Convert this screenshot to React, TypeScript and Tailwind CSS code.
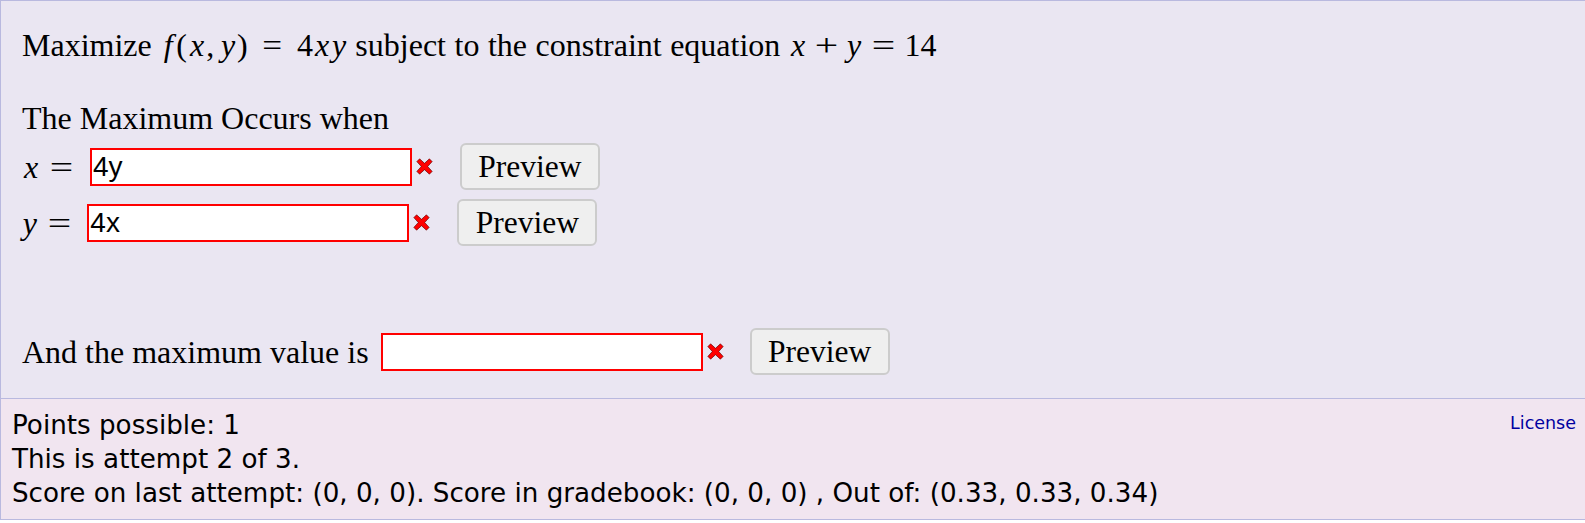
import React from "react";

const XMark = ({ className = "" }: { className?: string }) => (
  <svg className={className} width="17" height="17" viewBox="0 0 16 16">
    <path
      d="M3.4 0.8 L8 5 L12.6 0.8 L15.2 3.4 L11 8 L15.2 12.6 L12.6 15.2 L8 11 L3.4 15.2 L0.8 12.6 L5 8 L0.8 3.4 Z"
      fill="#ff0000"
      stroke="#5a0000"
      strokeWidth="0.6"
      strokeLinejoin="round"
    />
  </svg>
);

const Btn = ({ className = "" }: { className?: string }) => (
  <button
    className={
      "h-[47px] w-[140px] rounded-[6px] border-2 border-[#cccccc] bg-[#efefef] text-[31.5px] leading-none text-black " +
      className
    }
    style={{ fontFamily: '"Liberation Serif", serif' }}
  >
    Preview
  </button>
);

const Field = ({ value, className = "" }: { value: string; className?: string }) => (
  <input
    readOnly
    value={value}
    className={
      "h-[38px] w-[322px] border-2 border-[#ff0000] bg-white px-[1px] text-[28px] text-black outline-none " +
      className
    }
    style={{ fontFamily: '"Liberation Sans", Arial, sans-serif' }}
  />
);

export default function App() {
  const serif = { fontFamily: '"Liberation Serif", "Times New Roman", serif' };
  return (
    <div className="w-[1585px] h-[523px] bg-white">
      <div
        className="border-l border-t border-b border-[#b9b9df] bg-[#eae6f2] pl-[21px] pt-[26px] pb-[23px] text-black"
        style={serif}
      >
        <div className="text-[32px] leading-[36px] whitespace-nowrap">
          Maximize{" "}
          <span className="inline-block w-[0.49em] pl-[4px] text-left italic">f</span>
          <span className="inline-block w-[0.389em] text-center">(</span>
          <span className="inline-block w-[0.572em] text-center italic">x</span>
          <span className="inline-block w-[0.278em] mr-[0.167em]">,</span>
          <span className="inline-block w-[0.49em] text-center italic">y</span>
          <span className="inline-block w-[0.389em] text-center">)</span>
          <span className="inline-block w-[0.7em] mx-[13px] text-center scale-x-[1.1]">=</span>
          <span className="inline-block w-[0.5em] text-center">4</span>
          <span className="inline-block w-[0.572em] text-center italic">x</span>
          <span className="inline-block w-[0.49em] text-center italic">y</span>
          <span className="[word-spacing:0.5px]"> subject to the constraint equation </span>
          <span className="inline-block w-[0.572em] text-center italic">x</span>
          <span className="inline-block w-[0.778em] mx-[0.222em] text-center scale-x-[1.3]">+</span>
          <span className="inline-block w-[0.49em] text-center italic">y</span>
          <span className="inline-block w-[0.778em] mx-[0.278em] text-center scale-x-[1.3]">=</span>
          <span className="inline-block w-[1em] text-center">14</span>
        </div>
        <div className="mt-[37px] text-[32px] leading-[36px]">The Maximum Occurs when</div>
        <div className="mt-[7px] flex h-[47px] items-center text-[32px]">
          <span className="inline-block w-[0.572em] text-center italic">x</span>
          <span className="inline-block w-[0.778em] mx-[0.278em] text-center scale-x-[1.3]">=</span>
          <Field value="4y" className="ml-[7px]" />
          <XMark className="ml-[4px]" />
          <Btn className="ml-[27px]" />
        </div>
        <div className="mt-[9px] flex h-[47px] items-center text-[32px]">
          <span className="inline-block w-[0.49em] text-center italic">y</span>
          <span className="inline-block w-[0.778em] mx-[0.278em] text-center scale-x-[1.3]">=</span>
          <Field value="4x" className="ml-[7px]" />
          <XMark className="ml-[4px]" />
          <Btn className="ml-[27px]" />
        </div>
        <div className="mt-[82px] flex h-[47px] items-center text-[32px]">
          <span>And the maximum value is</span>
          <Field value="" className="ml-[12px]" />
          <XMark className="ml-[4px]" />
          <Btn className="ml-[26px]" />
        </div>
      </div>
      <div
        className="border-l border-b border-[#b9b9df] bg-[#f1e5f0] pl-[11px] pr-[9px] pt-[9px] pb-[9px] text-black"
        style={{ fontFamily: '"DejaVu Sans", Verdana, sans-serif' }}
      >
        <a className="float-right mt-[4px] text-[17.5px] leading-[22px] text-[#0000a0]">License</a>
        <div className="text-[26.2px] leading-[34px]">Points possible: 1</div>
        <div className="text-[26.2px] leading-[34px]">This is attempt 2 of 3.</div>
        <div className="text-[26.2px] leading-[34px] whitespace-nowrap">
          Score on last attempt: (0, 0, 0). Score in gradebook: (0, 0, 0) , Out of: (0.33, 0.33, 0.34)
        </div>
      </div>
    </div>
  );
}
